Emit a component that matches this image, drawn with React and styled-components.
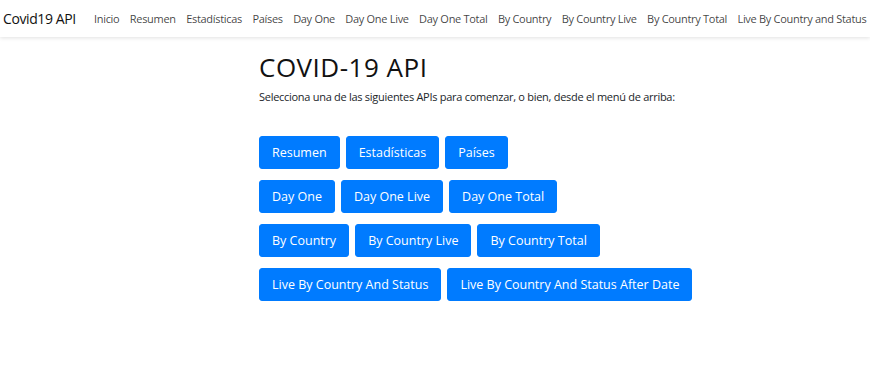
import React from 'react'
import styled, { createGlobalStyle } from 'styled-components'

const GlobalStyle = createGlobalStyle`
    body {
        margin: 0;
        background: #fff;
        font-family: "Open Sans", "Liberation Sans", sans-serif;
        color: #212529;
    }
`;

const Navbar = styled.nav`
    display: flex;
    align-items: center;
    height: 37px;
    padding: 0 0 0 3px;
    background: #fff;
    box-shadow: 0 1px 4px rgba(0, 0, 0, 0.12);
`;

const Brand = styled.a`
    font-size: 14px;
    letter-spacing: -0.4px;
    color: #111;
    margin-right: 13px;
    white-space: nowrap;
`;

const NavList = styled.ul`
    display: flex;
    list-style: none;
    margin: 0;
    padding: 0;
`;

const NavLink = styled.a`
    display: block;
    padding: 0 5.2px;
    font-size: 11px;
    letter-spacing: -0.3px;
    color: rgba(0, 0, 0, 0.75);
    white-space: nowrap;
`;

const Main = styled.main`
    padding: 15px 0 0 259px;
`;

const Title = styled.h1`
    margin: 0;
    font-size: 26px;
    letter-spacing: 0.5px;
    font-weight: 400;
    line-height: 1.2;
    color: #111;
`;

const Lead = styled.p`
    margin: 6px 0 30px;
    font-size: 11px;
    letter-spacing: -0.28px;
    line-height: 1.5;
`;

const Row = styled.div`
    display: flex;
    gap: 6px;
    margin-bottom: 11px;
`;

const Button = styled.button`
    font-family: inherit;
    font-size: 12.5px;
    line-height: 19px;
    padding: 6px 12px;
    color: #fff;
    background: #007bff;
    border: 1px solid #007bff;
    border-radius: 3px;
    cursor: pointer;
`;

const navItems = [
    'Inicio', 'Resumen', 'Estadísticas', 'Países', 'Day One', 'Day One Live',
    'Day One Total', 'By Country', 'By Country Live', 'By Country Total',
    'Live By Country and Status',
];

const rows = [
    ['Resumen', 'Estadísticas', 'Países'],
    ['Day One', 'Day One Live', 'Day One Total'],
    ['By Country', 'By Country Live', 'By Country Total'],
    ['Live By Country And Status', 'Live By Country And Status After Date'],
];

export default function App() {
    return (
        <>
            <GlobalStyle />
            <Navbar>
                <Brand>Covid19 API</Brand>
                <NavList>
                    {navItems.map(item => (
                        <li key={item}><NavLink>{item}</NavLink></li>
                    ))}
                </NavList>
            </Navbar>
            <Main>
                <Title>COVID-19 API</Title>
                <Lead>Selecciona una de las siguientes APIs para comenzar, o bien, desde el menú de arriba:</Lead>
                {rows.map((row, i) => (
                    <Row key={i}>
                        {row.map(label => <Button key={label}>{label}</Button>)}
                    </Row>
                ))}
            </Main>
        </>
    )
}
